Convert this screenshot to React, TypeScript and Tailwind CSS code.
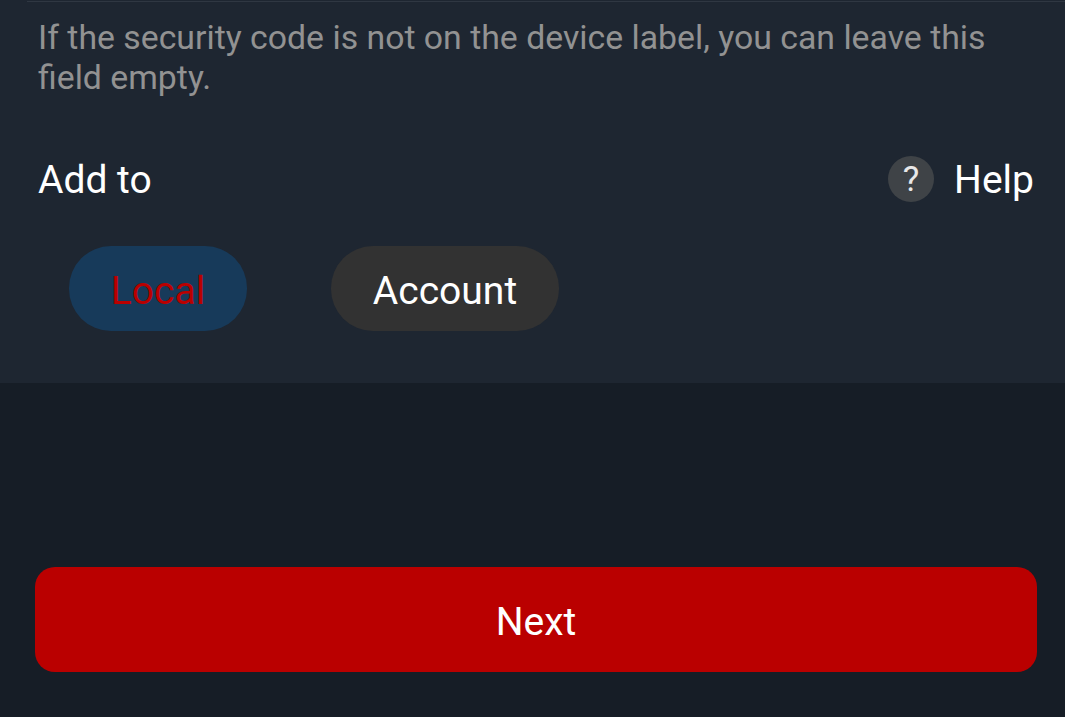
export default function App() {
  return (
    <div className="flex h-[717px] w-[1065px] flex-col overflow-hidden bg-[#161d26] font-['Roboto',sans-serif]">
      {/* Form card */}
      <div className="h-[383px] shrink-0 bg-[#1e2631] pl-[38px] pr-[31px] pt-px">
        <div className="-ml-[11px] -mr-[31px] h-px bg-[#2f3742]" />
        <p className="mt-[16px] text-[33.8px] leading-[40px] text-[#929292]">
          If the security code is not on the device label, you can leave this field empty.
        </p>
        <div className="mt-[59px] flex h-[46px] items-center justify-between">
          <span className="text-[39px] leading-[46px] text-white">Add to</span>
          <div className="flex items-center gap-[20px]">
            <div className="-mt-[2px] flex h-[46px] w-[46px] items-center justify-center rounded-full bg-[#3f4347] text-[35px] leading-none text-[#e8e8e8]">
              ?
            </div>
            <span className="text-[39px] leading-[46px] text-white">Help</span>
          </div>
        </div>
        <div className="mt-[43px] flex gap-[84px] pl-[31px]">
          <button className="h-[85px] w-[178px] rounded-[42px] bg-[#173a5a] pt-[5px] text-[39px] text-[#ba0000]">Local</button>
          <button className="h-[85px] w-[228px] rounded-[42px] bg-[#323232] pt-[5px] text-[39px] text-white">Account</button>
        </div>
      </div>

      {/* Footer action */}
      <div className="pl-[35px] pt-[184px]">
        <button className="h-[105px] w-[1002px] rounded-[20px] bg-[#ba0000] pt-[5px] text-[39px] text-white">Next</button>
      </div>
    </div>
  );
}
